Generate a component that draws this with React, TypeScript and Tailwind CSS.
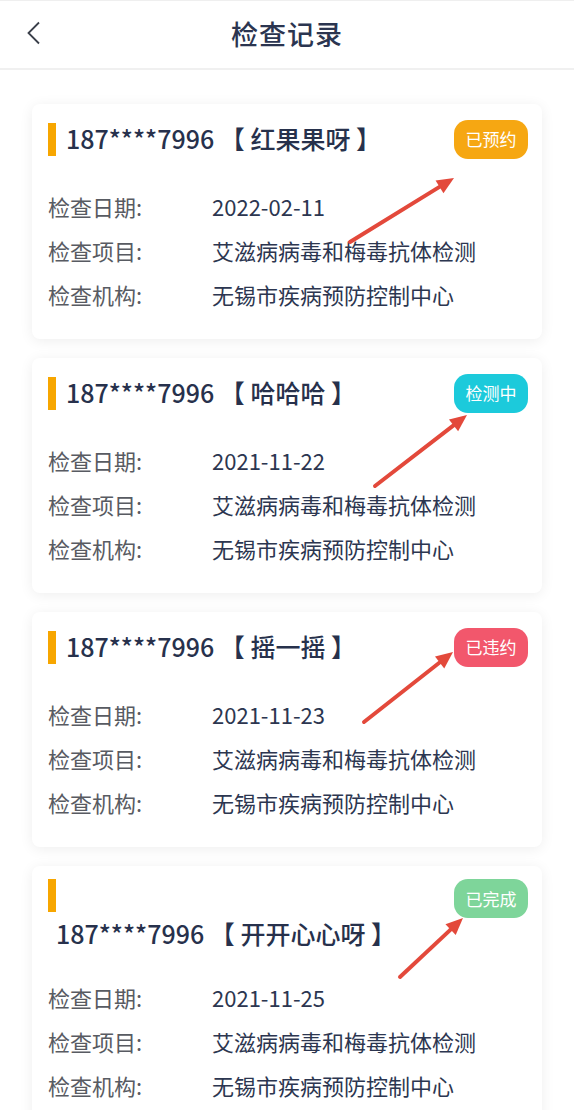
import React from "react";

type Rec = {
  name: string;
  date: string;
  status: string;
  badge: string;
  wrap?: boolean;
  arrow: [number, number, number, number];
};

const records: Rec[] = [
  { name: "红果果呀", date: "2022-02-11", status: "已预约", badge: "bg-[#f6a712]", arrow: [318, 138, 422, 74] },
  { name: "哈哈哈", date: "2021-11-22", status: "检测中", badge: "bg-[#1ccadb]", arrow: [343, 128, 435, 57] },
  { name: "摇一摇", date: "2021-11-23", status: "已违约", badge: "bg-[#f2576c]", arrow: [332, 110, 421, 40] },
  { name: "开开心心呀", date: "2021-11-25", status: "已完成", badge: "bg-[#7ed59a]", wrap: true, arrow: [368, 111, 431, 52] },
];

function Arrow({ a }: { a: [number, number, number, number] }) {
  const [x1, y1, x2, y2] = a;
  const dx = x2 - x1;
  const dy = y2 - y1;
  const len = Math.hypot(dx, dy);
  const ux = dx / len;
  const uy = dy / len;
  const bx = x2 - ux * 17;
  const by = y2 - uy * 17;
  const nx = -uy * 7.5;
  const ny = ux * 7.5;
  return (
    <svg className="absolute inset-0 w-full h-full pointer-events-none overflow-visible">
      <line x1={x1} y1={y1} x2={bx} y2={by} stroke="#e3493b" strokeWidth="4" strokeLinecap="round" />
      <polygon points={`${x2},${y2} ${bx + nx},${by + ny} ${bx - nx},${by - ny}`} fill="#e3493b" />
    </svg>
  );
}

function Row({ label, value }: { label: string; value: string }) {
  return (
    <div className="flex items-center h-[44px] text-[22px]">
      <span className="w-[164px] text-[#585b62]">{label}</span>
      <span className="text-[#2c3650]">{value}</span>
    </div>
  );
}

function Card({ r }: { r: Rec }) {
  const title = (
    <span className="text-[25px] font-medium text-[#27314c] whitespace-nowrap">
      187****7996 【 {r.name} 】
    </span>
  );
  return (
    <div className="relative bg-white rounded-lg shadow-[0_2px_14px_rgba(0,0,0,0.07)] pl-4 pr-[14px] pt-[15px] pb-[23px]">
      {r.wrap ? (
        <div className="-mt-[2px]">
          <div className="flex items-start justify-between h-[39px]">
            <div className="w-2 h-[33px] bg-[#f7a600]" />
            <div className={`w-[74px] h-[39px] rounded-[14px] ${r.badge} text-white text-[17px] flex items-center justify-center`}>
              {r.status}
            </div>
          </div>
          <div className="h-[32px] flex items-center pl-2">{title}</div>
        </div>
      ) : (
        <div className="flex items-center justify-between h-[40px]">
          <div className="flex items-center gap-[10px]">
            <div className="w-2 h-[33px] bg-[#f7a600]" />
            {title}
          </div>
          <div className={`w-[74px] h-[39px] rounded-[14px] ${r.badge} text-white text-[17px] flex items-center justify-center`}>
            {r.status}
          </div>
        </div>
      )}
      <div className="mt-[25px]">
        <Row label="检查日期:" value={r.date} />
        <Row label="检查项目:" value="艾滋病病毒和梅毒抗体检测" />
        <Row label="检查机构:" value="无锡市疾病预防控制中心" />
      </div>
      <Arrow a={r.arrow} />
    </div>
  );
}

export default function App() {
  return (
    <div className="w-[574px] h-[1110px] overflow-hidden bg-white font-['Noto_Sans_CJK_SC','Noto_Sans',sans-serif]">
      <div className="relative h-[70px] border-t border-[#efefef] border-b-2 border-b-[#f0f0f0] flex items-center justify-center">
        <svg className="absolute left-[26px] top-[20px]" width="16" height="24" viewBox="0 0 16 24">
          <path d="M13 1.5 L2.5 12 L13 22.5" fill="none" stroke="#3a3f4a" strokeWidth="1.8" />
        </svg>
        <h1 className="text-[27px] font-medium text-[#2b3550] tracking-[1px]">检查记录</h1>
      </div>
      <div className="px-8 pt-[34px] flex flex-col gap-[19px]">
        {records.map((r) => (
          <Card key={r.name} r={r} />
        ))}
      </div>
    </div>
  );
}
